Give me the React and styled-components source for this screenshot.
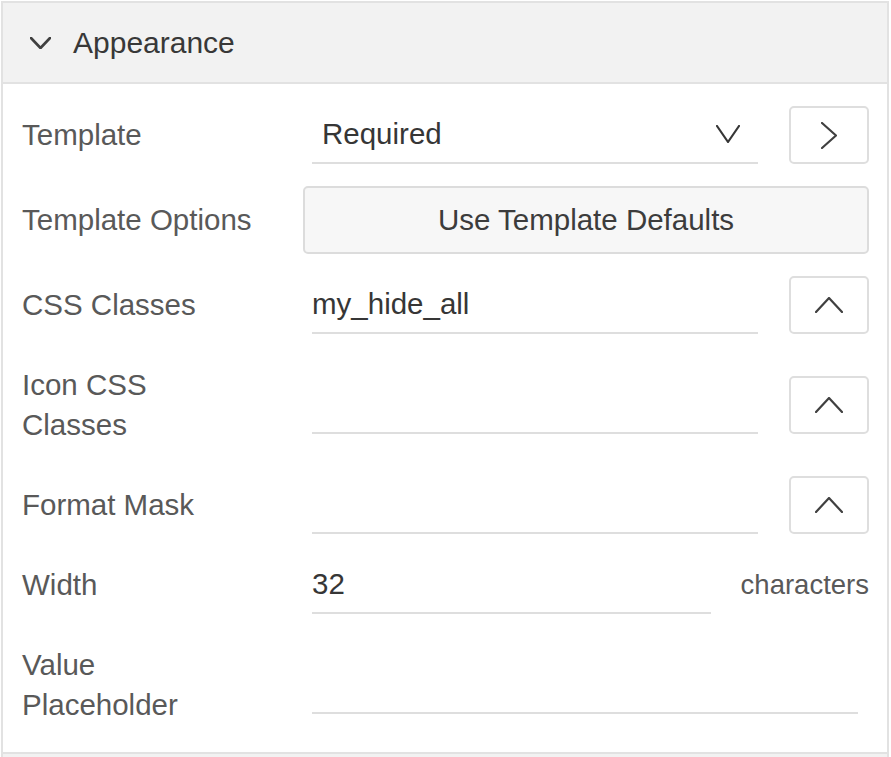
import React from "react"
import styled, { createGlobalStyle } from "styled-components"

const GlobalStyle = createGlobalStyle`
  html, body {
    margin: 0;
    padding: 0;
    background: #ffffff;
  }
  body {
    font-family: "Liberation Sans", Arial, sans-serif;
  }
`

const Panel = styled.section`
  margin: 1px 2px 0 1px;
  border-left: 2px solid #e2e2e2;
  border-right: 2px solid #e2e2e2;
`

const Header = styled.div`
  height: 79px;
  display: flex;
  align-items: center;
  gap: 22px;
  padding-left: 27px;
  background: #f2f2f2;
  border-top: 2px solid #e2e2e2;
  border-bottom: 2px solid #e2e2e2;
  color: #383838;
  font-size: 30px;
`

const Body = styled.div`
  padding: 11px 0 7px;
  border-bottom: 2px solid #e2e2e2;
`

const NextHeader = styled.div`
  height: 3px;
  background: #f2f2f2;
`

const Row = styled.div`
  display: flex;
  align-items: center;
  padding: 11px 18px 11px 19px;
`

const Label = styled.div`
  width: 281px;
  flex: none;
  padding: 9px 0;
  line-height: 40px;
  font-size: 29.5px;
  color: #595959;
`

const Field = styled.div`
  flex: 1;
  height: 58px;
  margin-left: 9px;
  margin-right: ${p => p.$gapRight}px;
  display: flex;
  align-items: center;
  justify-content: space-between;
  padding-left: ${p => (p.$select ? 10 : 0)}px;
  padding-right: ${p => (p.$select ? 18 : 0)}px;
  box-sizing: border-box;
  border-bottom: 2px solid #dedede;
  font-size: 29.5px;
  color: #363636;
`

const IconButton = styled.div`
  width: 80px;
  height: 58px;
  flex: none;
  box-sizing: border-box;
  border: 2px solid #dedede;
  border-radius: 5px;
  background: #ffffff;
  display: flex;
  align-items: center;
  justify-content: center;
  color: #404040;
`

const WideButton = styled.div`
  flex: 1;
  height: 68px;
  box-sizing: border-box;
  border: 2px solid #dcdcdc;
  border-radius: 5px;
  background: #f7f7f7;
  display: flex;
  align-items: center;
  justify-content: center;
  font-size: 29.5px;
  color: #3c3c3c;
`

const Unit = styled.span`
  flex: none;
  margin-left: 30px;
  font-size: 27.5px;
  color: #595959;
`

const Chevron = ({ dir, w, h, sw = 2.2 }) => {
  const pts = {
    down: `1,1 ${w / 2},${h - 1} ${w - 1},1`,
    up: `1,${h - 1} ${w / 2},1 ${w - 1},${h - 1}`,
    right: `1,1 ${w - 1},${h / 2} 1,${h - 1}`,
  }[dir]
  return (
    <svg width={w} height={h} viewBox={`0 0 ${w} ${h}`} fill="none">
      <polyline
        points={pts}
        stroke="currentColor"
        strokeWidth={sw}
        strokeLinecap="round"
        strokeLinejoin="round"
      />
    </svg>
  )
}

const ExpandButton = ({ dir = "up" }) => (
  <IconButton>
    {dir === "up" ? <Chevron dir="up" w={28} h={16} /> : <Chevron dir="right" w={16} h={27} />}
  </IconButton>
)

export default function App() {
  return (
    <>
      <GlobalStyle />
      <Panel>
        <Header>
          <span style={{ color: "#404040", display: "flex" }}>
            <Chevron dir="down" w={21} h={12} sw={2.6} />
          </span>
          Appearance
        </Header>
        <Body>
          <Row>
            <Label>Template</Label>
            <Field $select $gapRight={31}>
              Required
              <Chevron dir="down" w={24} h={18} />
            </Field>
            <ExpandButton dir="right" />
          </Row>
          <Row>
            <Label>Template Options</Label>
            <WideButton>Use Template Defaults</WideButton>
          </Row>
          <Row>
            <Label>CSS Classes</Label>
            <Field $gapRight={31}>my_hide_all</Field>
            <ExpandButton />
          </Row>
          <Row>
            <Label>
              Icon CSS
              <br />
              Classes
            </Label>
            <Field $gapRight={31} />
            <ExpandButton />
          </Row>
          <Row>
            <Label>Format Mask</Label>
            <Field $gapRight={31} />
            <ExpandButton />
          </Row>
          <Row>
            <Label>Width</Label>
            <Field $gapRight={0}>32</Field>
            <Unit>characters</Unit>
          </Row>
          <Row>
            <Label>
              Value
              <br />
              Placeholder
            </Label>
            <Field $gapRight={11} />
          </Row>
        </Body>
        <NextHeader />
      </Panel>
    </>
  )
}
